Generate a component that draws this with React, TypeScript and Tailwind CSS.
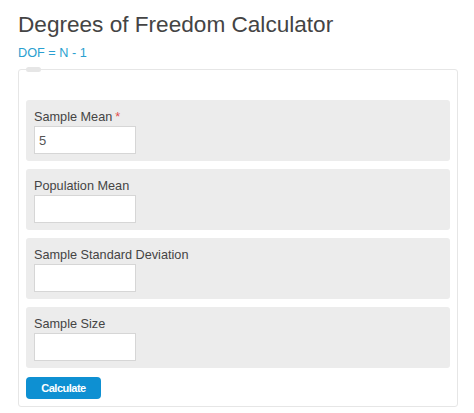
import React from "react";

const fields = [
  { label: "Sample Mean", required: true, value: "5" },
  { label: "Population Mean", required: false, value: "" },
  { label: "Sample Standard Deviation", required: false, value: "" },
  { label: "Sample Size", required: false, value: "" },
];

export default function App() {
  return (
    <div
      className="min-h-screen bg-white px-[18px] pt-[11px]"
      style={{ fontFamily: '"Liberation Sans", Arial, sans-serif' }}
    >
      <h1 className="text-[22.6px] leading-[28px] text-[#444444] font-normal">
        Degrees of Freedom Calculator
      </h1>
      <div className="mt-[6px] text-[12.7px] leading-[16px] text-[#2a9fd0]">DOF = N - 1</div>
      <div className="relative mt-[8px] w-[440px] rounded-[3px] border border-[#e6e6e6] px-[7px] pt-[30px] pb-[7px]">
        <div className="absolute left-[7px] top-[-3px] h-[5px] w-[15px] rounded-[3px] bg-[#e6e6e6]" />
        <div className="flex flex-col gap-[8px]">
          {fields.map((f) => (
            <div key={f.label} className="rounded-[3px] bg-[#ececec] px-[8px] pt-[8px] pb-[7px]">
              <div className="h-[18px] text-[12.7px] leading-[18px] text-[#444444]">
                {f.label}
                {f.required && <span className="ml-[3px] text-[#e24b4b]">*</span>}
              </div>
              <input
                readOnly
                value={f.value}
                className="block h-[28px] w-[102px] border border-[#d6d6d6] bg-white px-[4px] text-[13px] text-[#555555] outline-none"
              />
            </div>
          ))}
        </div>
        <button className="mt-[9px] h-[22px] w-[75px] rounded-[4px] bg-[#0e90d2] text-[11px] font-bold tracking-[-0.5px] text-white">
          Calculate
        </button>
      </div>
    </div>
  );
}
